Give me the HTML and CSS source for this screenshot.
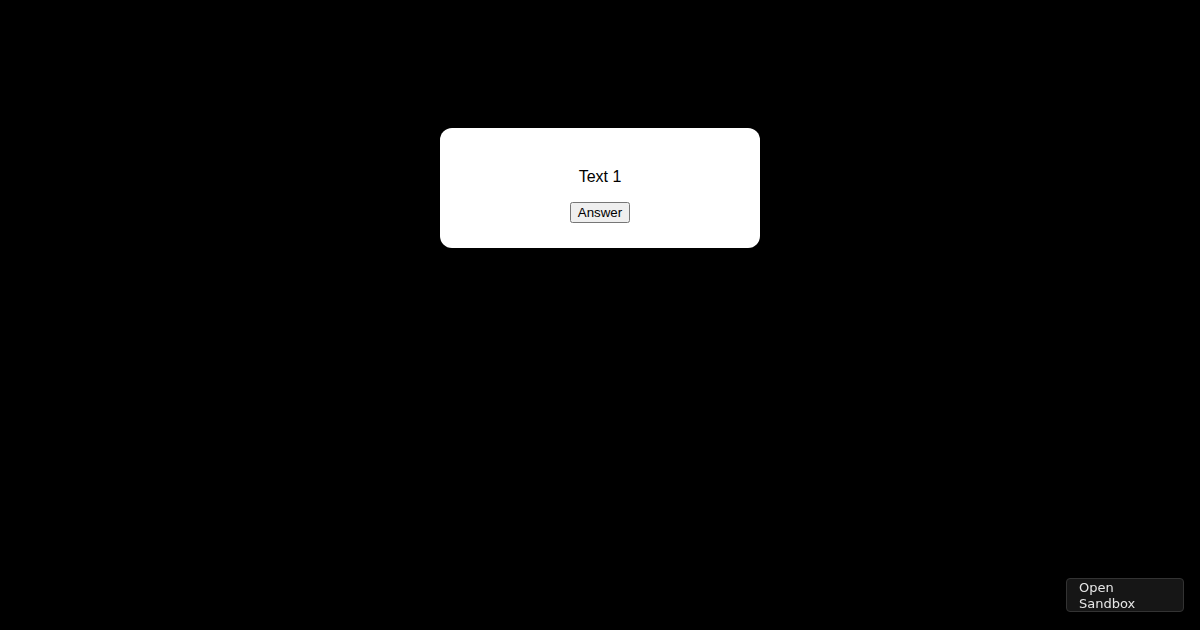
FILE: index.html
```html
<!DOCTYPE html>
<html lang="en">
<head>
<meta charset="utf-8">
<title>Flashcard</title>
<link rel="stylesheet" href="styles.css">
</head>
<body>
<main class="stage">
  <div class="card">
    <p class="card-text">Text 1</p>
    <button class="answer-btn" type="button">Answer</button>
  </div>
</main>
<button class="sandbox-btn" type="button">Open Sandbox</button>
</body>
</html>
```

FILE: styles.css
```css
html, body {
  margin: 0;
  padding: 0;
  background: #000;
  height: 100%;
}
body {
  font-family: "Liberation Sans", Arial, sans-serif;
  color: #000;
}
.stage {
  padding-top: 128px;
  display: flex;
  justify-content: center;
}
.card {
  width: 320px;
  box-sizing: border-box;
  background: #fff;
  border-radius: 12px;
  padding: 24px 24px 25px;
  text-align: center;
}
.card-text {
  margin: 16px 0;
  font-size: 16px;
}
.answer-btn {
  font-family: "Liberation Sans", Arial, sans-serif;
  font-size: 13.333px;
}
.sandbox-btn {
  position: fixed;
  right: 16px;
  bottom: 18px;
  width: 118px;
  height: 34px;
  box-sizing: border-box;
  padding: 1px 12px 0;
  background: #161616;
  border: 1px solid #333;
  border-radius: 4px;
  color: #e6e6e6;
  font-family: "DejaVu Sans", sans-serif;
  font-size: 13px;
  line-height: 16px;
  text-align: left;
  -webkit-appearance: none;
  appearance: none;
}
```
